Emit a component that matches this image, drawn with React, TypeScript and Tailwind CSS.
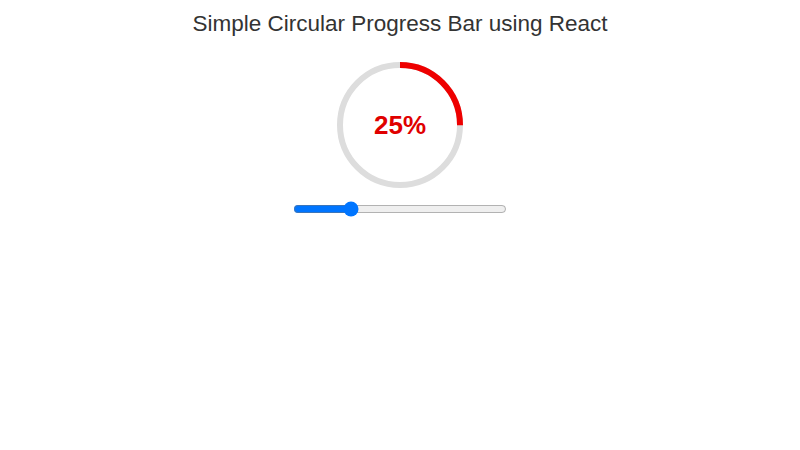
import { useState } from "react";

const SIZE = 126;
const STROKE = 6;

const CircularProgress = ({ value }: { value: number }) => {
    const r = (SIZE - STROKE) / 2;
    const circumference = 2 * Math.PI * r;
    const offset = circumference - (value / 100) * circumference;

    return (
        <div className="relative h-[126px] w-[126px]">
            <svg width={SIZE} height={SIZE} className="-rotate-90">
                <circle
                    cx={SIZE / 2}
                    cy={SIZE / 2}
                    r={r}
                    fill="none"
                    stroke="#dddddd"
                    strokeWidth={STROKE}
                />
                <circle
                    cx={SIZE / 2}
                    cy={SIZE / 2}
                    r={r}
                    fill="none"
                    stroke="#ee0000"
                    strokeWidth={STROKE}
                    strokeDasharray={circumference}
                    strokeDashoffset={offset}
                />
            </svg>
            <div className="absolute inset-0 flex items-center justify-center text-[26px] font-bold text-[#e00000]">
                {value}%
            </div>
        </div>
    );
};

export default function App() {
    const [value, setValue] = useState(25);

    return (
        <div className="flex flex-col items-center font-['Liberation_Sans',Arial,sans-serif]">
            <h1 className="mt-[10px] text-[22.5px] leading-[28px] text-[#333333]">
                Simple Circular Progress Bar using React
            </h1>
            <div className="mt-[24px]">
                <CircularProgress value={value} />
            </div>
            <input
                type="range"
                min={0}
                max={100}
                value={value}
                onChange={(e) => setValue(Number(e.target.value))}
                className="mt-[13px] w-[214px]"
            />
        </div>
    );
}
